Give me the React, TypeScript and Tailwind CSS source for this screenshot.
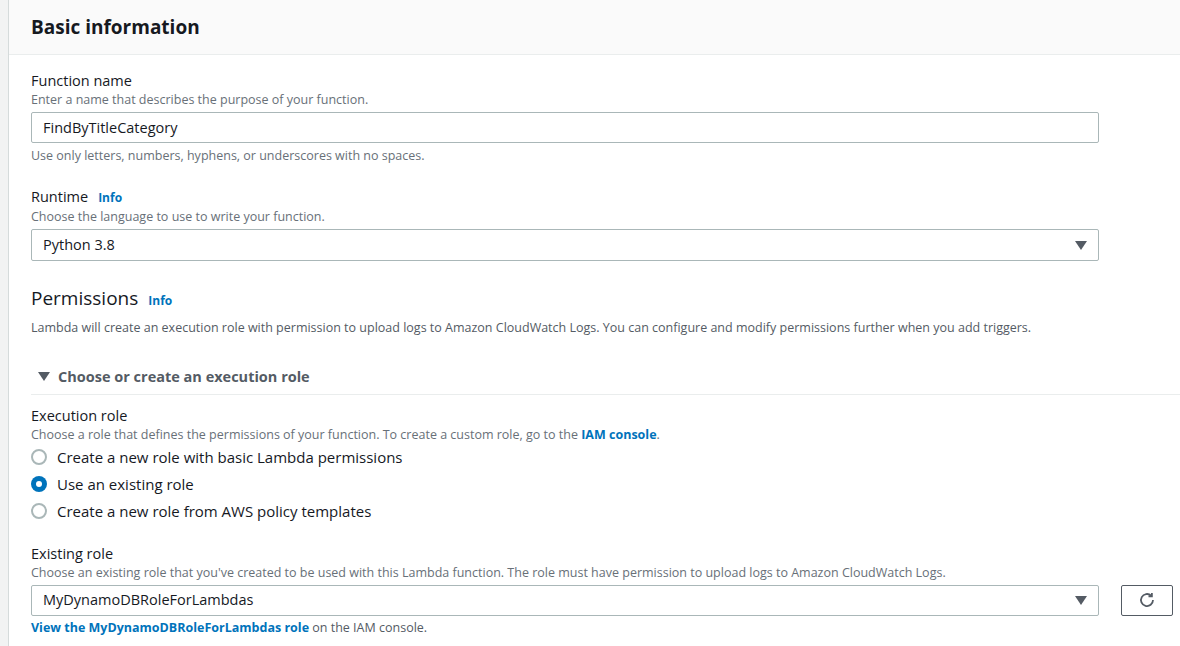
import React from "react";

const Info = () => <span className="ml-[10px] text-[12px] font-bold text-[#0073bb]">Info</span>;
const Tri = () => (
  <svg width="12" height="9" viewBox="0 0 12 9"><path d="M0 0H12L6 9Z" fill="#545b64" /></svg>
);
const Radio = ({ on, label }: { on?: boolean; label: string }) => (
  <div className="flex items-center h-[27px]">
    {on ? (
      <span className="w-[16px] h-[16px] rounded-full bg-[#0073bb] flex items-center justify-center"><span className="w-[6px] h-[6px] rounded-full bg-white" /></span>
    ) : (
      <span className="w-[16px] h-[16px] rounded-full border-2 border-[#aab7b8] bg-white" />
    )}
    <span className="ml-[10px] text-[15px] text-[#16191f]">{label}</span>
  </div>
);

export default function App() {
  return (
    <div className="w-[1180px] h-[646px] overflow-hidden bg-[#f2f3f3] flex" style={{ fontFamily: '"Open Sans", sans-serif' }}>
      <div className="w-[8px] shrink-0" />
      <div className="flex-1 bg-white border-l border-[#d5dbdb]">
        <div className="h-[55px] bg-[#fafafa] border-b border-[#eaeded] pl-[22px] flex items-center">
          <span className="text-[19px] font-bold text-[#16191f]">Basic information</span>
        </div>
        <div className="pl-[22px] pr-[81px]">
          <div className="mt-[15px] text-[14.5px] text-[#16191f] leading-[22px]">Function name</div>
          <div className="text-[12.5px] text-[#687078] leading-[16px]">Enter a name that describes the purpose of your function.</div>
          <div className="mt-[4px] h-[31px] border border-[#aab7b8] rounded-[2px] flex items-center px-[11px] text-[14.5px] text-[#16191f]">FindByTitleCategory</div>
          <div className="mt-[5px] text-[12.5px] text-[#687078] leading-[16px]">Use only letters, numbers, hyphens, or underscores with no spaces.</div>

          <div className="mt-[22px] text-[14.5px] text-[#16191f] leading-[22px] flex items-baseline">Runtime <Info /></div>
          <div className="text-[12.5px] text-[#687078] leading-[16px]">Choose the language to use to write your function.</div>
          <div className="mt-[4px] h-[32px] border border-[#aab7b8] rounded-[2px] flex items-center justify-between px-[11px] text-[14.5px] text-[#16191f]">Python 3.8 <Tri /></div>

          <div className="mt-[24px] text-[19px] text-[#16191f] leading-[26px] flex items-baseline">Permissions <Info /></div>
          <div className="mt-[6px] text-[12.5px] text-[#545b64] leading-[16px]">Lambda will create an execution role with permission to upload logs to Amazon CloudWatch Logs. You can configure and modify permissions further when you add triggers.</div>
        </div>
        <div className="ml-[22px] mt-[30px] border-b border-[#eaeded] pb-[6px] flex items-center pl-[7px]">
          <Tri /><span className="ml-[8px] text-[14.5px] font-bold text-[#545b64]">Choose or create an execution role</span>
        </div>
        <div className="pl-[22px] pr-[81px]">
          <div className="mt-[10px] text-[14.5px] text-[#16191f] leading-[22px]">Execution role</div>
          <div className="text-[12.5px] text-[#687078] leading-[16px]">Choose a role that defines the permissions of your function. To create a custom role, go to the <span className="font-bold text-[#0073bb]">IAM console</span>.</div>
          <div className="mt-[1px]">
            <Radio label="Create a new role with basic Lambda permissions" />
            <Radio on label="Use an existing role" />
            <Radio label="Create a new role from AWS policy templates" />
          </div>
          <div className="mt-[18px] text-[14.5px] text-[#16191f] leading-[22px]">Existing role</div>
          <div className="text-[12.5px] text-[#687078] leading-[16px]">Choose an existing role that you've created to be used with this Lambda function. The role must have permission to upload logs to Amazon CloudWatch Logs.</div>
        </div>
        <div className="pl-[22px] flex items-center mt-[4px]">
          <div className="w-[1068px] h-[31px] border border-[#aab7b8] rounded-[2px] flex items-center justify-between px-[11px] text-[14.5px] text-[#16191f]">MyDynamoDBRoleForLambdas <Tri /></div>
          <div className="ml-[22px] w-[52px] h-[31px] border border-[#545b64] rounded-[2px] flex items-center justify-center">
            <svg width="18" height="18" viewBox="0 0 24 24" fill="none" stroke="#545b64" strokeWidth="2.4"><path d="M20 12a8 8 0 1 1-2.5-5.8" /><path d="M18.5 2.5v4.5H14" /></svg>
          </div>
        </div>
        <div className="pl-[22px] mt-[4px] text-[12.5px] text-[#545b64] leading-[16px]"><span className="font-bold text-[#0073bb]">View the MyDynamoDBRoleForLambdas role</span> on the IAM console.</div>
      </div>
    </div>
  );
}
